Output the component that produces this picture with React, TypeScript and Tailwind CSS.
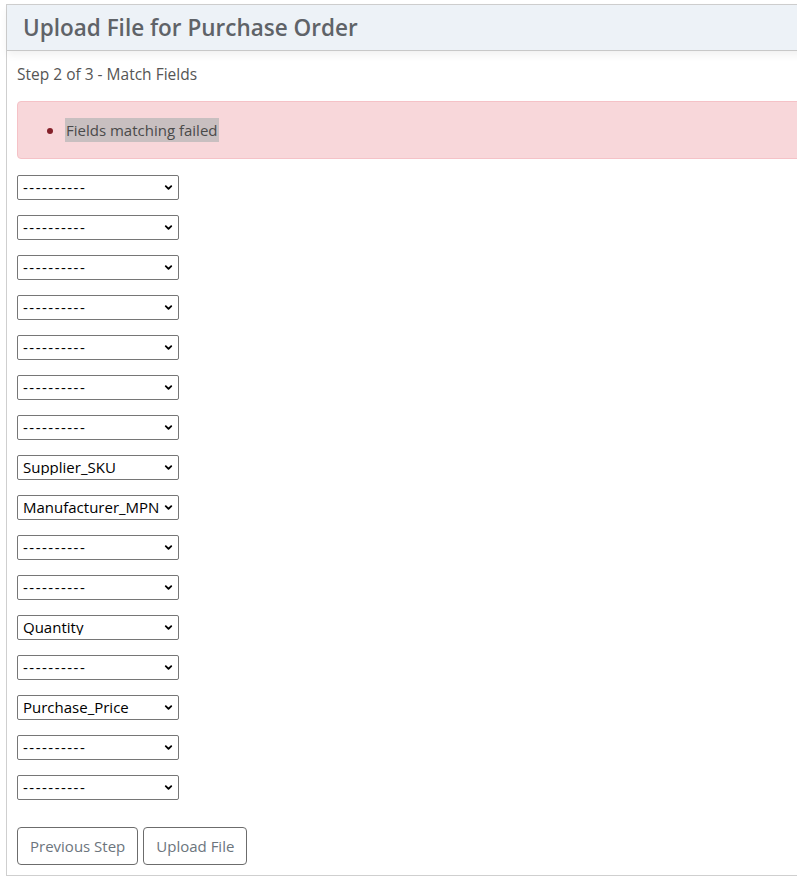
import { ChevronDown } from 'lucide-react'

const DASHES = '----------'

const fields = [
  DASHES,
  DASHES,
  DASHES,
  DASHES,
  DASHES,
  DASHES,
  DASHES,
  'Supplier_SKU',
  'Manufacturer_MPN',
  DASHES,
  DASHES,
  'Quantity',
  DASHES,
  'Purchase_Price',
  DASHES,
  DASHES,
]

const options = [DASHES, 'Supplier_SKU', 'Manufacturer_MPN', 'Quantity', 'Purchase_Price']

function FieldSelect({ value }: { value: string }) {
  return (
    <div className="relative w-[162px] h-[25px]">
      <select
        defaultValue={value}
        className={
          'appearance-none w-full h-full border border-[#767676] rounded-[2px] bg-white pl-[5px] pr-[18px] text-[15px] text-black leading-none outline-none ' +
          (value === DASHES ? 'tracking-[1.5px]' : '')
        }
      >
        {options.map((o) => (
          <option key={o} value={o}>
            {o}
          </option>
        ))}
      </select>
      <ChevronDown
        className="pointer-events-none absolute right-[5px] top-[7px] w-[11px] h-[11px] text-black"
        strokeWidth={4}
      />
    </div>
  )
}

export default function App() {
  return (
    <div
      className="w-[797px] h-[883px] overflow-hidden bg-white"
      style={{ fontFamily: '"Open Sans", "Liberation Sans", sans-serif' }}
    >
      <div className="ml-[6px] mt-[4px] w-[810px] border border-[#cfcfcf] bg-white">
        <div className="h-[46px] bg-[#edf2f7] border-b border-[#c8c8c8] flex items-center pl-[16px] shadow-[0_4px_8px_rgba(0,0,0,0.06)]">
          <h1 className="text-[22.5px] font-semibold text-[#5f6368]">Upload File for Purchase Order</h1>
        </div>
        <div className="px-[10px] pt-[13px] pb-[10px]">
          <p className="text-[15.5px] text-[#555] leading-[20px]">Step 2 of 3 - Match Fields</p>
          <div className="mt-[17px] h-[58px] rounded-[4px] border border-[#f5c2c7] bg-[#f8d7da] flex items-center pl-[33px]">
            <ul className="list-disc text-[#842029] pl-[14px]">
              <li>
                <span className="bg-[#c8bfc0] text-[#4a4a4a] text-[15px] leading-[24px] inline-block px-[1px]">
                  Fields matching failed
                </span>
              </li>
            </ul>
          </div>
          <div className="mt-[16px] flex flex-col gap-[15px]">
            {fields.map((f, i) => (
              <FieldSelect key={i} value={f} />
            ))}
          </div>
          <div className="mt-[27px] flex gap-[5px]">
            <button className="h-[38px] px-[12px] border border-[#6c6c6c] rounded-[4px] text-[15px] text-[#6c757d] bg-white">
              Previous Step
            </button>
            <button className="h-[38px] px-[12px] border border-[#6c6c6c] rounded-[4px] text-[15px] text-[#6c757d] bg-white">
              Upload File
            </button>
          </div>
        </div>
      </div>
    </div>
  )
}
